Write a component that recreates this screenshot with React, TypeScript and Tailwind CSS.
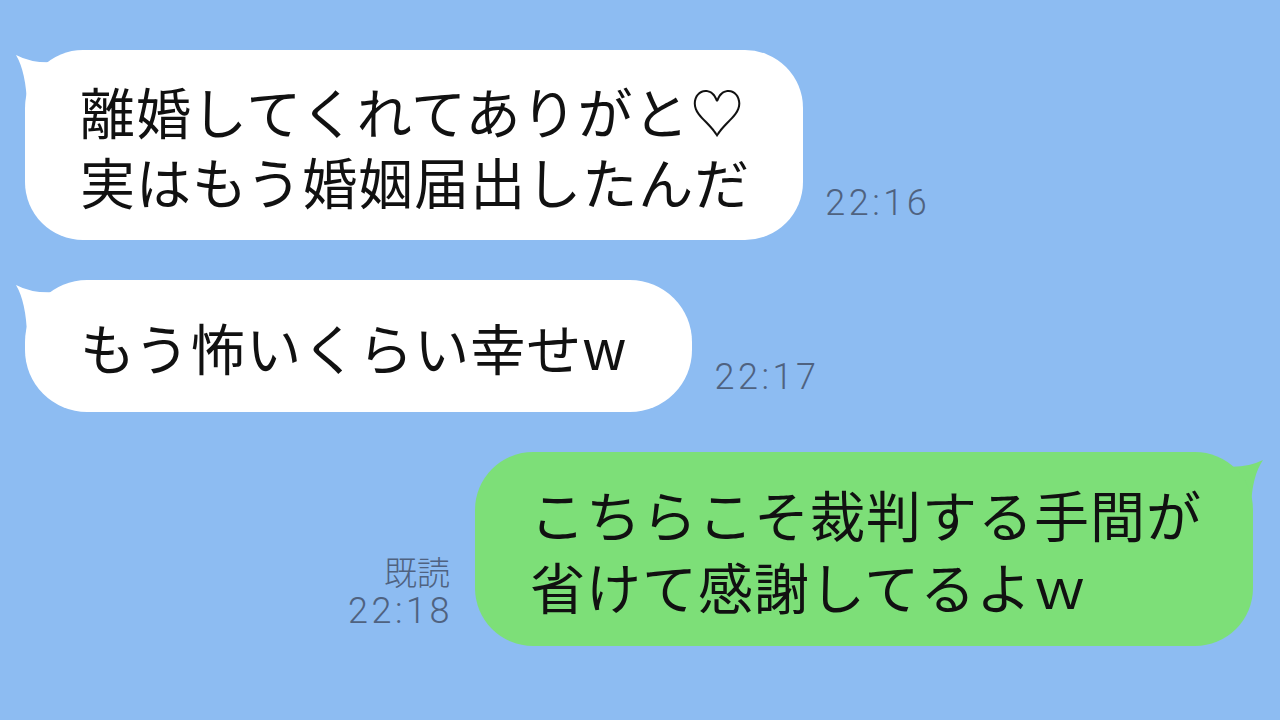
import React from "react";

const jp = { fontFamily: '"Noto Sans CJK JP", "Noto Sans", sans-serif' } as const;
const tm = { fontFamily: 'Roboto, "Noto Sans", sans-serif' } as const;

function LeftTail({ fill }: { fill: string }) {
  return (
    <svg
      className="absolute left-[-10px] top-0 overflow-visible"
      width="50"
      height="60"
      viewBox="-10 0 50 60"
    >
      <path d="M -9 5 Q 8 14 32 12 L 32 55 L 2 55 Q 1 22 -9 5 Z" fill={fill} />
    </svg>
  );
}

function RightTail({ fill }: { fill: string }) {
  return (
    <svg
      className="absolute right-[-10px] top-0 overflow-visible"
      width="50"
      height="60"
      viewBox="-40 0 50 60"
    >
      <path d="M 10 8 Q -8 17 -32 14 L -32 55 L -2 55 Q -1 24 10 8 Z" fill={fill} />
    </svg>
  );
}

export default function App() {
  return (
    <div className="w-[1280px] h-[720px] overflow-hidden bg-[#8dbcf2] flex flex-col pt-[50px]">
      {/* Message 1 */}
      <div className="flex items-end pl-[25px]">
        <div className="relative">
          <LeftTail fill="#ffffff" />
          <div
            className="relative bg-white rounded-[58px] pl-[55px] pr-[53px] py-[25px] text-[55px] leading-[70px] tracking-[1px] text-[#111111]"
            style={jp}
          >
            <div>離婚してくれてありがと♡</div>
            <div>実はもう婚姻届出したんだ</div>
          </div>
        </div>
        <div
          className="ml-[22px] mb-[19px] text-[36px] leading-[36px] font-light tracking-[3.5px] text-[#4f6280]"
          style={tm}
        >
          22:16
        </div>
      </div>

      {/* Message 2 */}
      <div className="flex items-end pl-[25px] mt-[40px]">
        <div className="relative">
          <LeftTail fill="#ffffff" />
          <div
            className="relative bg-white rounded-[62px] pl-[55px] pr-[65px] py-[31px] text-[55px] leading-[70px] tracking-[1px] text-[#111111]"
            style={jp}
          >
            <div>もう怖いくらい幸せw</div>
          </div>
        </div>
        <div
          className="ml-[22px] mb-[17px] text-[36px] leading-[36px] font-light tracking-[3.5px] text-[#4f6280]"
          style={tm}
        >
          22:17
        </div>
      </div>

      {/* Message 3 */}
      <div className="flex items-end justify-end pr-[27px] mt-[40px]">
        <div className="flex flex-col items-end mr-[25px] mb-[15px] text-[#4f6280]">
          <div className="text-[33px] leading-[40px] font-light" style={jp}>
            既読
          </div>
          <div
            className="text-[36px] leading-[40px] font-light tracking-[3.5px] -mr-[3px]"
            style={tm}
          >
            22:18
          </div>
        </div>
        <div className="relative">
          <RightTail fill="#7ddf78" />
          <div
            className="relative bg-[#7ddf78] rounded-[58px] pl-[55px] pr-[51px] py-[25px] text-[55px] leading-[72px] tracking-[1px] text-[#111111]"
            style={jp}
          >
            <div>こちらこそ裁判する手間が</div>
            <div>省けて感謝してるよｗ</div>
          </div>
        </div>
      </div>
    </div>
  );
}
